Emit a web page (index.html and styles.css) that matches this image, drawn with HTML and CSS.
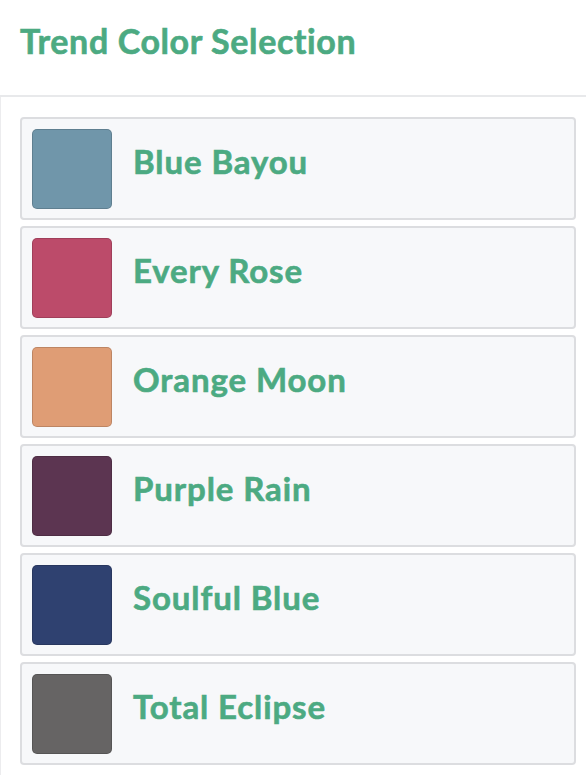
FILE: index.html
```html
<!DOCTYPE html>
<html lang="en">
<head>
  <meta charset="UTF-8" />
  <meta name="viewport" content="width=device-width, initial-scale=1.0"/>
  <title>Trend Color Selection</title>
  <link rel="stylesheet" href="styles.css">
</head>
<body>

  <div class="panel">
    <!-- Header -->
    <div class="panel__header">
      <h1 class="panel__title">Trend Color Selection</h1>
    </div>

    <!-- Color list -->
    <div class="color-list">
      <div class="color-card">
        <div class="swatch swatch--bayou"></div>
        <div class="color-card__name">Blue Bayou</div>
      </div>
      <div class="color-card">
        <div class="swatch swatch--rose"></div>
        <div class="color-card__name">Every Rose</div>
      </div>
      <div class="color-card">
        <div class="swatch swatch--orange"></div>
        <div class="color-card__name">Orange Moon</div>
      </div>
      <div class="color-card">
        <div class="swatch swatch--purple"></div>
        <div class="color-card__name">Purple Rain</div>
      </div>
      <div class="color-card">
        <div class="swatch swatch--soulful"></div>
        <div class="color-card__name">Soulful Blue</div>
      </div>
      <div class="color-card">
        <div class="swatch swatch--eclipse"></div>
        <div class="color-card__name">Total Eclipse</div>
      </div>
    </div>
  </div>

</body>
</html>
```

FILE: styles.css
```css
* {
  box-sizing: border-box;
  margin: 0;
  padding: 0;
}

body {
  font-family: Lato, "Liberation Sans", sans-serif;
  background-color: #ffffff;
}

.panel__header {
  height: 97px;
  padding: 20px 20px 0;
  border-bottom: 2px solid #e8e9eb;
}

.panel__title {
  font-size: 34px;
  font-weight: 700;
  color: #4caa82;
  letter-spacing: 0.6px;
  -webkit-text-stroke: 0.6px #4caa82;
}

.color-list {
  display: flex;
  flex-direction: column;
  gap: 6px;
  padding: 20px 10px 10px 19px;
  border-left: 1px solid #ececee;
}

.color-card {
  display: flex;
  align-items: center;
  gap: 21px;
  height: 103px;
  padding: 0 10px;
  background-color: #f7f8fa;
  border: 2px solid #dcdde0;
  border-radius: 4px;
}

.color-card__name {
  margin-bottom: 15px;
  font-size: 33px;
  font-weight: 700;
  color: #4caa82;
  letter-spacing: 0.9px;
  -webkit-text-stroke: 0.6px #4caa82;
}

/* Swatches */
.swatch {
  flex-shrink: 0;
  width: 80px;
  height: 80px;
  border-radius: 5px;
  border: 1px solid rgba(0, 0, 0, 0.15);
}

.swatch--bayou { background-color: #7096aa; }
.swatch--rose { background-color: #bc4b6a; }
.swatch--orange { background-color: #df9d75; }
.swatch--purple { background-color: #5c3551; }
.swatch--soulful { background-color: #2f4170; }
.swatch--eclipse { background-color: #666464; }
```
